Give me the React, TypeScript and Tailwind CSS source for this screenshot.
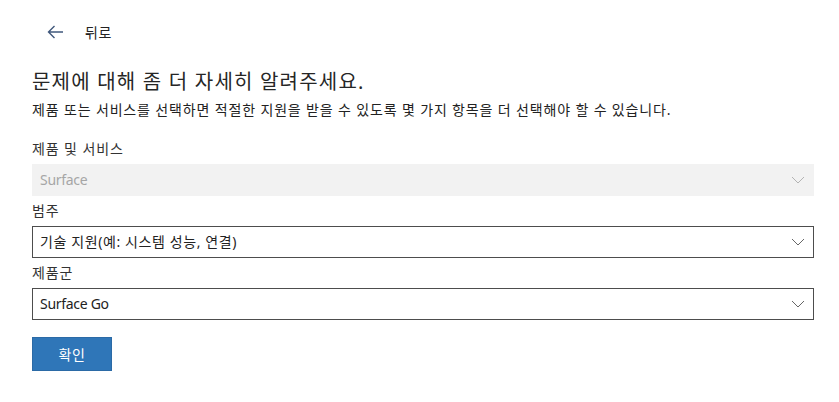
const font = { fontFamily: '"Noto Sans", "Noto Sans CJK KR", sans-serif' };

const Chevron = ({ color }: { color: string }) => (
  <svg width="14" height="8" viewBox="0 0 14 8" fill="none">
    <path d="M1 1l6 6 6-6" stroke={color} strokeWidth="1" />
  </svg>
);

const SelectBox = ({ value, disabled, ko }: { value: string; disabled?: boolean; ko?: boolean }) => (
  <div
    className={
      disabled
        ? 'flex h-[32px] items-center justify-between bg-[#f2f2f2] pl-2 pr-[9px] text-[#a6a6a6]'
        : 'flex h-[32px] items-center justify-between border border-[#4d4d4d] pl-[7px] pr-2 text-[#222]'
    }
  >
    <span className={ko ? 'text-[14px] leading-none tracking-[0.6px]' : 'text-[14px] leading-none tracking-[-0.3px]'}>
      {value}
    </span>
    <Chevron color={disabled ? '#b3b3b3' : '#666'} />
  </div>
);

export default function App() {
  return (
    <div className="h-[402px] w-[839px] bg-white text-[#222]" style={font}>
      <div className="w-[814px] pl-8 pt-[20px]">
        <button className="flex h-[24px] items-center gap-[21px] pl-[15px]">
          <svg width="17" height="14" viewBox="0 0 17 14" fill="none">
            <path d="M16 7H1.5M7.5 1L1.5 7l6 6" stroke="#40587c" strokeWidth="1.4" />
          </svg>
          <span className="text-[14px] tracking-[0.5px]">뒤로</span>
        </button>

        <h1 className="mt-[24px] text-[20px] leading-[28px] tracking-[1.2px] text-[#262626]">
          문제에 대해 좀 더 자세히 알려주세요.
        </h1>
        <p className="mt-[4px] text-[14px] leading-[20px] tracking-[0.85px]">
          제품 또는 서비스를 선택하면 적절한 지원을 받을 수 있도록 몇 가지 항목을 더 선택해야 할 수 있습니다.
        </p>

        <div className="mt-[19px] flex flex-col">
          <label className="text-[14px] leading-[20px] tracking-[0.9px] text-[#333]">제품 및 서비스</label>
          <div className="mt-[5px]">
            <SelectBox value="Surface" disabled />
          </div>
          <label className="mt-[5px] text-[14px] leading-[20px] tracking-[0.9px] text-[#333]">범주</label>
          <div className="mt-[5px]">
            <SelectBox value="기술 지원(예: 시스템 성능, 연결)" ko />
          </div>
          <label className="mt-[5px] text-[14px] leading-[20px] tracking-[0.9px] text-[#333]">제품군</label>
          <div className="mt-[5px]">
            <SelectBox value="Surface Go" />
          </div>
        </div>

        <button className="mt-[17px] h-[34px] w-[80px] border border-[#2b6aa6] bg-[#2f76b8] text-[14px] tracking-[0.5px] text-white">
          확인
        </button>
      </div>
    </div>
  );
}
